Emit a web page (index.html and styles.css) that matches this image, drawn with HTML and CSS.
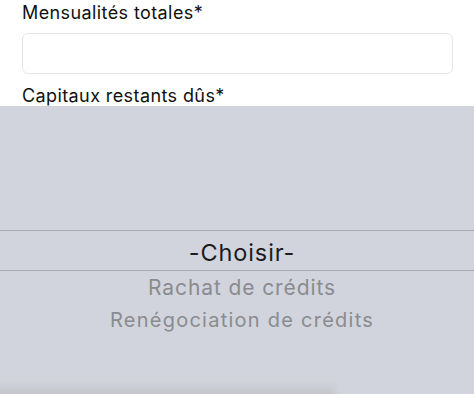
FILE: index.html
```html
<!DOCTYPE html>
<html lang="fr">
<head>
<meta charset="utf-8">
<link rel="stylesheet" href="styles.css">
</head>
<body>
<div class="form">
  <div class="label">Mensualités totales*</div>
  <div class="input"></div>
  <div class="label label-2">Capitaux restants dûs*</div>
</div>
<div class="picker">
  <div class="spacer"></div>
  <div class="row selected">-Choisir-</div>
  <div class="row opt opt-1">Rachat de crédits</div>
  <div class="row opt opt-2">Renégociation de crédits</div>
</div>
</body>
</html>
```
FILE: styles.css
```css
html, body {
  margin: 0;
  padding: 0;
  background: #ffffff;
  width: 474px;
  height: 394px;
  overflow: hidden;
  font-family: Inter, "Liberation Sans", sans-serif;
}
.form {
  height: 106px;
  overflow: hidden;
  padding: 0 21px 0 22px;
  box-sizing: border-box;
}
.label {
  font-size: 18px;
  line-height: 22px;
  color: #111;
  padding-top: 2px;
  letter-spacing: 0.4px;
}
.input {
  margin-top: 9px;
  height: 41px;
  border: 1px solid #e6e6e8;
  border-radius: 6px;
  box-sizing: border-box;
}
.label-2 {
  padding-top: 11px;
}
.picker {
  height: 288px;
  background:
    linear-gradient(to right, rgba(0,0,0,0) 0, rgba(0,0,0,0) 330px, #d1d4dc 340px) ,
    linear-gradient(to bottom, rgba(196,198,202,0) 0, rgba(196,198,202,0) 275px, rgba(196,198,202,1) 288px),
    #d1d4dc;
  display: flex;
  flex-direction: column;
  align-items: stretch;
}
.spacer {
  height: 124px;
}
.row {
  text-align: center;
  padding-left: 10px;
}
.selected {
  height: 39px;
  border-top: 1px solid #a8aab1;
  border-bottom: 1px solid #a8aab1;
  font-size: 23.5px;
  line-height: 43px;
  color: #1b1b1d;
  letter-spacing: 0.9px;
}
.opt {
  color: #8a8b90;
}
.opt-1 {
  font-size: 21px;
  line-height: 34px;
  letter-spacing: 0.9px;
}
.opt-2 {
  font-size: 20px;
  line-height: 31px;
  letter-spacing: 1.25px;
}
```
